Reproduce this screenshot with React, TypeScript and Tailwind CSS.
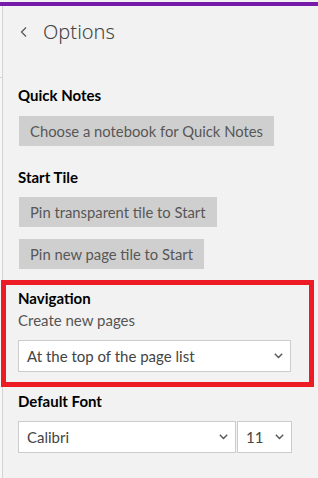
const font = { fontFamily: 'Lato, "Noto Sans", sans-serif' };

function GrayButton({ label }: { label: string }) {
  return (
    <button className="block h-[30px] px-[11px] bg-[#cfcfcf] text-[14.8px] text-[#575757] leading-[30px] whitespace-nowrap">
      {label}
    </button>
  );
}

function Caret() {
  return (
    <svg width="9" height="6" viewBox="0 0 9 6">
      <polyline points="0.8,0.8 4.5,4.5 8.2,0.8" fill="none" stroke="#555" strokeWidth="1.4" />
    </svg>
  );
}

function Select({ value, className }: { value: string; className: string }) {
  return (
    <div
      className={`flex items-center justify-between h-[32px] bg-white border border-[#cccccc] pl-[8px] pr-[7px] text-[15px] text-[#444] ${className}`}
    >
      <span>{value}</span>
      <Caret />
    </div>
  );
}

export default function App() {
  return (
    <div className="relative w-[318px] h-[478px] bg-[#f2f2f2] overflow-hidden flex flex-col" style={font}>
      <div className="h-[2px]" />
      <div className="h-[4px] bg-[#7719aa]" />
      <div className="flex flex-1">
        {/* left pane edge */}
        <div className="w-[3px] flex flex-col border-r border-[#d4d4d4] bg-[#f7f7f7]">
          <div className="h-[72px] border-b border-[#d4d4d4]" />
        </div>

        <div className="flex-1 pl-[15px]">
          {/* header */}
          <div className="flex items-center h-[50px] pt-[2px]">
            <svg width="8" height="10" viewBox="0 0 8 10" className="ml-[2px] mr-[15px]">
              <polyline points="6,0.5 1.5,5 6,9.5" fill="none" stroke="#555" strokeWidth="1.2" />
            </svg>
            <span className="text-[20px] font-light text-[#444]" style={{ fontFamily: '"Noto Sans", sans-serif' }}>
              Options
            </span>
          </div>

          <div className="mt-[29px] text-[15px] font-bold text-black leading-[20px]">Quick Notes</div>
          <div className="mt-[11px] pl-[1px]">
            <GrayButton label="Choose a notebook for Quick Notes" />
          </div>

          <div className="mt-[21px] text-[15px] font-bold text-black leading-[20px]">Start Tile</div>
          <div className="mt-[10px] pl-[1px] flex flex-col gap-[12px] items-start">
            <GrayButton label="Pin transparent tile to Start" />
            <GrayButton label="Pin new page tile to Start" />
          </div>

          <div className="mt-[19px] text-[15px] font-bold text-black leading-[20px]">Navigation</div>
          <div className="mt-[2px] text-[15px] text-[#555] leading-[20px]">Create new pages</div>
          <Select value="At the top of the page list" className="mt-[10px] w-[273px]" />

          <div className="mt-[19px] text-[15px] font-bold text-black leading-[20px]">Default Font</div>
          <div className="mt-[10px] flex gap-[1px]">
            <Select value="Calibri" className="w-[218px]" />
            <Select value="11" className="w-[55px]" />
          </div>
        </div>
      </div>

      {/* annotation highlight */}
      <div className="absolute left-[1px] top-[280px] w-[313px] h-[107px] border-[5px] border-[#ed1c24]" />
    </div>
  );
}
